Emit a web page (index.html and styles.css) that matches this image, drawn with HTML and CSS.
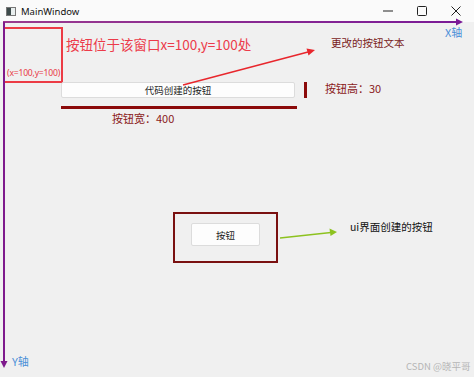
FILE: index.html
```html
<!DOCTYPE html>
<html lang="zh">
<head>
  <meta charset="UTF-8">
  <title>MainWindow</title>
  <link rel="stylesheet" href="styles.css">
</head>
<body>
  <div class="window">
    <div class="title_bar">
      <span class="app_icon"></span>
      <span class="title">MainWindow</span>
      <div class="controls">
        <span class="ctrl">
          <svg width="10" height="10" viewBox="0 0 10 10"><line x1="0" y1="5" x2="10" y2="5" stroke="#222" stroke-width="1"/></svg>
        </span>
        <span class="ctrl">
          <svg width="10" height="10" viewBox="0 0 10 10"><rect x="0.5" y="0.5" width="9" height="9" rx="1" fill="none" stroke="#222" stroke-width="1"/></svg>
        </span>
        <span class="ctrl">
          <svg width="10" height="10" viewBox="0 0 10 10"><path d="M0.5 0.5L9.5 9.5M9.5 0.5L0.5 9.5" stroke="#222" stroke-width="1"/></svg>
        </span>
      </div>
    </div>
    <div class="client">
      <!-- 좌표 표시 -->
      <div class="origin_box"><span>(x=100,y=100)</span></div>
      <p class="note note_pos">按钮位于该窗口x=100,y=100处</p>
      <p class="note note_text">更改的按钮文本</p>
      <p class="note note_h">按钮高：30</p>
      <p class="note note_w">按钮宽：400</p>
      <p class="note note_ui">ui界面创建的按钮</p>
      <button class="btn code_btn">代码创建的按钮</button>
      <div class="ui_frame">
        <button class="btn ui_btn">按钮</button>
      </div>
      <span class="axis_lbl x_lbl">X轴</span>
      <span class="axis_lbl y_lbl">Y轴</span>
      <span class="mark">CSDN @晓平哥</span>
    </div>
    <svg class="overlay" width="474" height="377" viewBox="0 0 474 377">
      <defs>
        <linearGradient id="ax" x1="0" x2="1" y1="0" y2="0">
          <stop offset="0" stop-color="#9a3a8e"/>
          <stop offset="1" stop-color="#7a1a96"/>
        </linearGradient>
      </defs>
      <rect x="3" y="21" width="454" height="2" fill="url(#ax)"/>
      <path d="M456 18.5L463 22L456 25.5Z" fill="#7a1a96"/>
      <rect x="3" y="22" width="2" height="340" fill="#7e1a8c"/>
      <path d="M0.5 361L4 368L7.5 361Z" fill="#7e1a8c"/>
      <line x1="183" y1="85" x2="308" y2="52" stroke="#e8262c" stroke-width="1.5"/>
      <path d="M315 50L306.5 48.5L308.5 55.5Z" fill="#e8262c"/>
      <rect x="61" y="106" width="236" height="3" fill="#8b0a0a"/>
      <rect x="304" y="82" width="3" height="16" fill="#8b0a0a"/>
      <line x1="280" y1="238" x2="331" y2="232.5" stroke="#8dc21f" stroke-width="1.5"/>
      <path d="M337 232L329.5 228.5L330.5 236Z" fill="#8dc21f"/>
    </svg>
  </div>
</body>
</html>
```

FILE: styles.css
```css
*{margin: 0; padding: 0; box-sizing: border-box;}
body{
  width: 474px; height: 377px;
  overflow: hidden;
  background: #f0f0f0;
  font-family: "Noto Sans", "Noto Sans CJK SC", sans-serif;
}
.window{
  position: relative;
  width: 474px; height: 377px;
  display: flex;
  flex-direction: column;
}
.title_bar{
  height: 22px;
  background: #fafafa;
  display: flex;
  align-items: center;
  padding-left: 6px;
}
.app_icon{
  width: 10px; height: 9px;
  border: 1px solid #777;
  background: linear-gradient(90deg, #3c4a4a 0 45%, #e8eeee 45%);
}
.title{
  margin-left: 5px;
  font-size: 9.5px;
  color: #111;
}
.controls{
  margin-left: auto;
  display: flex;
  padding-right: 13px;
  gap: 24px;
}
.ctrl{display: flex; width: 10px; height: 10px;}
.client{
  position: relative;
  flex: 1;
  background: #f0f0f0;
}
.origin_box{
  position: absolute;
  left: 3px; top: 5px;
  width: 60px; height: 56px;
  border: 2px solid #ec3b45;
}
.origin_box span{
  position: absolute;
  left: 2px; bottom: 2px;
  font-size: 8.6px;
  color: #e83a45;
  white-space: nowrap;
  letter-spacing: -0.2px;
}
.note{
  position: absolute;
  white-space: nowrap;
  font-family: "Noto Sans CJK SC", sans-serif;
  line-height: 1;
}
.note_pos{left: 66px; top: 16px; font-size: 13.5px; color: #ec3b4a;}
.note_text{left: 331px; top: 16px; font-size: 10.5px; color: #7a1c1c;}
.note_h{left: 325px; top: 61px; font-size: 11px; color: #8b1a1a;}
.note_w{left: 112px; top: 91px; font-size: 11px; color: #8b1a1a;}
.note_ui{left: 350px; top: 200px; font-size: 10.5px; color: #111;}
.btn{
  position: absolute;
  background: #fdfdfd;
  border: 1px solid #dcdcdc;
  border-radius: 2px;
  font-family: "Noto Sans CJK SC", sans-serif;
  font-size: 9.5px;
  color: #222;
}
.code_btn{left: 61px; top: 60px; width: 234px; height: 16px;}
.ui_frame{
  position: absolute;
  left: 173px; top: 190px;
  width: 105px; height: 51px;
  border: 2px solid #7a1010;
}
.ui_btn{left: 16px; top: 9px; width: 69px; height: 23px;}
.axis_lbl{
  position: absolute;
  font-size: 11px;
  color: #4a8fd8;
  font-family: "Noto Sans CJK SC", sans-serif;
  line-height: 1;
}
.x_lbl{left: 445px; top: 5px;}
.y_lbl{left: 12px; top: 334px;}
.mark{
  position: absolute;
  left: 406px; top: 337px;
  font-size: 9.5px;
  color: #b5b5b5;
  font-family: "Noto Sans CJK SC", sans-serif;
  white-space: nowrap;
}
.overlay{
  position: absolute;
  left: 0; top: 0;
  pointer-events: none;
}
```
